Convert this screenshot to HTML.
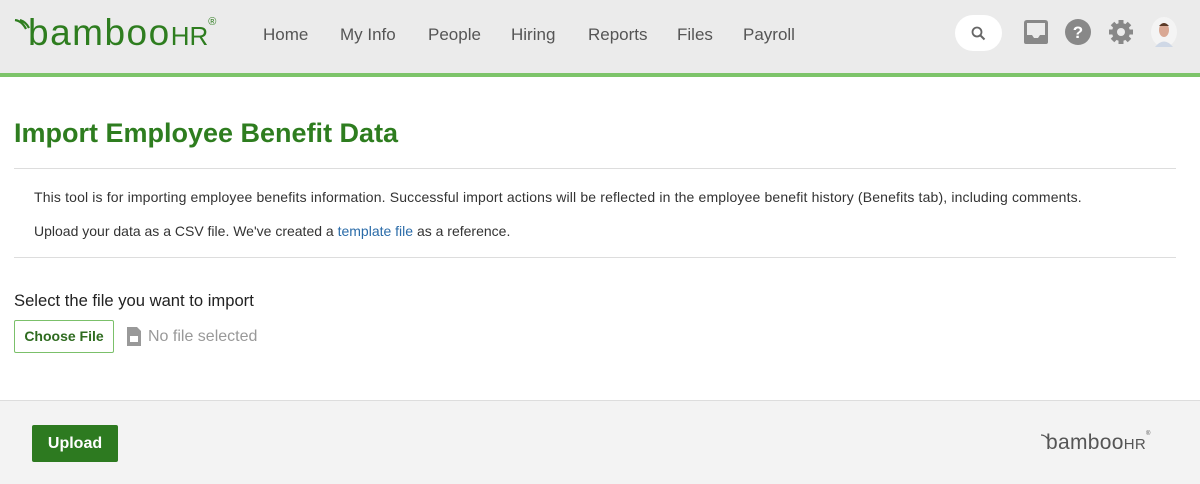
<!DOCTYPE html>
<html><head><meta charset="utf-8"><style>
*{margin:0;padding:0;box-sizing:border-box}
body{width:1200px;height:484px;overflow:hidden;background:#fff;font-family:"Liberation Sans",sans-serif;position:relative}
.hdr{position:absolute;left:0;top:0;width:1200px;height:77px;background:#ebebeb;border-bottom:4px solid #7dc46a}
.logo{position:absolute;left:28px;top:12px;font-size:37px;color:#2e7d1f;letter-spacing:1.5px;font-family:"Liberation Sans",sans-serif}
.logo small{font-size:26px;letter-spacing:0}
.logo sup{font-size:11px;vertical-align:top;position:relative;top:4px}
.nav{position:absolute;top:25px;font-size:17px;color:#555}
.srch{position:absolute;left:955px;top:15px;width:47px;height:36px;border-radius:18px;background:#fff}
h1{position:absolute;left:14px;top:118px;font-size:27px;color:#2e7d1f;font-weight:bold}
.line{position:absolute;height:1px;background:#ddd}
.t{position:absolute;font-size:14px;color:#333}
.foot{position:absolute;left:0;top:400px;width:1200px;height:84px;background:#f3f3f3;border-top:1px solid #ddd}
.btn{position:absolute;left:32px;top:425px;width:86px;height:37px;background:#2d7a20;border-radius:2px;color:#fff;font-weight:bold;font-size:16px;text-align:center;line-height:37px}
.cf{position:absolute;left:14px;top:320px;width:100px;height:33px;border:1px solid #7bc06a;border-radius:2px;color:#2e6b1f;font-weight:bold;font-size:14px;text-align:center;line-height:31px}
</style></head><body>
<div class="hdr">
<svg style="position:absolute;left:14px;top:19px" width="18" height="12" viewBox="0 0 18 12"><path d="M1 1 Q8 2 12 10 M6 1 Q12 3 15 9" stroke="#2e7d1f" stroke-width="2.2" fill="none"/></svg>
<div class="logo">bamboo<small>HR</small><sup>®</sup></div>
<div class="nav" style="left:263px">Home</div>
<div class="nav" style="left:340px">My Info</div>
<div class="nav" style="left:428px">People</div>
<div class="nav" style="left:511px">Hiring</div>
<div class="nav" style="left:588px">Reports</div>
<div class="nav" style="left:677px">Files</div>
<div class="nav" style="left:743px">Payroll</div>
<div class="srch"><svg style="position:absolute;left:16px;top:11px" width="15" height="15" viewBox="0 0 15 15"><circle cx="6" cy="6" r="4.5" stroke="#666" stroke-width="1.8" fill="none"/><path d="M9.5 9.5 L13.5 13.5" stroke="#666" stroke-width="2"/></svg></div>
<svg style="position:absolute;left:1022px;top:19px" width="28" height="26" viewBox="0 0 28 26"><path d="M2 4 Q2 1 5 1 H23 Q26 1 26 4 V23 Q26 25 24 25 H4 Q2 25 2 23Z M5 4 V16 H10 L12 19 H16 L18 16 H23 V4Z" fill="#888" fill-rule="evenodd"/></svg>
<svg style="position:absolute;left:1064px;top:18px" width="28" height="28"><circle cx="14" cy="14" r="13" fill="#888"/><text x="14" y="20" text-anchor="middle" font-size="17" font-weight="bold" fill="#fff" font-family="Liberation Sans">?</text></svg>
<svg style="position:absolute;left:1107px;top:18px" width="28" height="28" viewBox="0 0 28 28"><g fill="#888"><circle cx="14" cy="14" r="9"/><g stroke="#888" stroke-width="5"><path d="M14 2v24M2 14h24M5.5 5.5l17 17M22.5 5.5l-17 17"/></g></g><circle cx="14" cy="14" r="4" fill="#ebebeb"/></svg>
<svg style="position:absolute;left:1150px;top:16px" width="28" height="32"><ellipse cx="14" cy="16" rx="13" ry="15" fill="#f4f4f4"/><ellipse cx="14" cy="14" rx="5" ry="7" fill="#d9a894"/><path d="M9 10 Q14 4 19 10" fill="#5a3a28"/><path d="M5 31 Q14 20 23 31Z" fill="#cfd8e6"/></svg>
</div>
<h1>Import Employee Benefit Data</h1>
<div class="line" style="left:14px;top:168px;width:1162px"></div>
<div class="t" style="left:34px;top:189px;letter-spacing:0.15px">This tool is for importing employee benefits information. Successful import actions will be reflected in the employee benefit history (Benefits tab), including comments.</div>
<div class="t" style="left:34px;top:223px">Upload your data as a CSV file. We've created a <span style="color:#2a6ba8">template file</span> as a reference.</div>
<div class="line" style="left:14px;top:257px;width:1162px"></div>
<div class="t" style="left:14px;top:291px;font-size:16.6px;color:#222">Select the file you want to import</div>
<div class="cf">Choose File</div>
<svg style="position:absolute;left:126px;top:326px" width="16" height="21" viewBox="0 0 16 21"><path d="M1 1 H11 L15 5 V20 H1Z" fill="#999"/><rect x="4" y="10" width="8" height="6" fill="#fff"/></svg>
<div class="t" style="left:148px;top:328px;font-size:16px;color:#999">No file selected</div>
<div class="foot"></div>
<div class="btn">Upload</div>
<svg style="position:absolute;left:1041px;top:434px" width="8" height="6"><path d="M0 1 Q4 1 7 5" stroke="#555" stroke-width="1.3" fill="none"/></svg>
<div style="position:absolute;left:1046px;top:431px;font-size:21px;color:#555;letter-spacing:0.3px">bamboo<span style="font-size:15px">HR</span><sup style="font-size:6px;vertical-align:top">®</sup></div>
</body></html>
